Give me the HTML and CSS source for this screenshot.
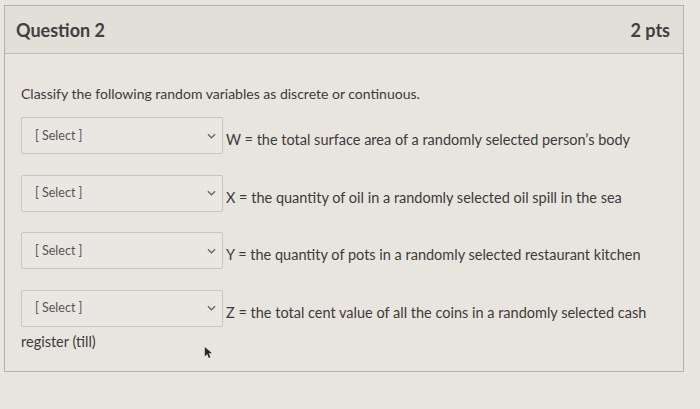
FILE: index.html
```html
<!DOCTYPE html>
<html lang="en">
<head>
    <meta charset="UTF-8">
    <meta name="viewport" content="width=device-width, initial-scale=1.0">
    <title>Question 2</title>
    <link rel="stylesheet" href="styles.css">
</head>
<body>
    <div class="quiz-card">
        <div class="quiz-header">
            <span class="quiz-title">Question 2</span>
            <span class="quiz-points">2 pts</span>
        </div>

        <div class="quiz-body">
            <p class="prompt">Classify the following random variables as discrete or continuous.</p>

            <p class="answer-row">
                <span class="select-box"><span class="select-label">[ Select ]</span>
                    <svg class="chevron" viewBox="0 0 10 6"><path d="M1 1l4 4 4-4"/></svg>
                </span><span>W = the total surface area of a randomly selected person’s body</span>
            </p>
            <p class="answer-row">
                <span class="select-box"><span class="select-label">[ Select ]</span>
                    <svg class="chevron" viewBox="0 0 10 6"><path d="M1 1l4 4 4-4"/></svg>
                </span><span>X = the quantity of oil in a randomly selected oil spill in the sea</span>
            </p>
            <p class="answer-row">
                <span class="select-box"><span class="select-label">[ Select ]</span>
                    <svg class="chevron" viewBox="0 0 10 6"><path d="M1 1l4 4 4-4"/></svg>
                </span><span>Y = the quantity of pots in a randomly selected restaurant kitchen</span>
            </p>
            <p class="answer-row">
                <span class="select-box"><span class="select-label">[ Select ]</span>
                    <svg class="chevron" viewBox="0 0 10 6"><path d="M1 1l4 4 4-4"/></svg>
                </span><span>Z = the total cent value of all the coins in a randomly selected cash</span> <span>register (till)</span>
            </p>
        </div>
    </div>

    <!-- mouse pointer left on screen -->
    <svg class="pointer" viewBox="0 0 10 16"><path d="M1 1v12l3-3 2 5 2-1-2-5h4z"/></svg>
</body>
</html>
```

FILE: styles.css
```css
body {
    font-family: Lato, "Open Sans", sans-serif;
    margin: 0;
    padding: 5px 0 0 4px;
    background-color: #e8e5df;
    color: #3b3b3b;
}
.quiz-card {
    width: 680px;
    height: 367px;
    border: 1px solid #b4b1ab;
    box-sizing: border-box;
}
.quiz-header {
    display: flex;
    justify-content: space-between;
    align-items: center;
    height: 47px;
    padding: 0 13px 0 11px;
    background-color: #e2dfd9;
    border-bottom: 1px solid #c0bdb7;
    font-size: 18px;
    font-weight: bold;
    color: #404040;
}
.quiz-body {
    padding: 31px 12px 0 16px;
    width: 652px;
}
.prompt {
    margin: 0 0 15px;
    font-size: 14px;
}
.answer-row {
    margin: 0 0 20px;
    font-size: 14.5px;
    line-height: 30px;
}
.select-box {
    display: inline-flex;
    align-items: center;
    justify-content: space-between;
    box-sizing: border-box;
    width: 202px;
    height: 37px;
    margin-right: 3px;
    padding: 0 6px 0 13px;
    vertical-align: 5px;
    border: 1px solid #c9c6c0;
    border-radius: 2px;
    background-color: #eae7e2;
    color: #555;
}
.select-label {
    font-size: 12.5px;
}
.chevron {
    width: 9px;
    height: 6px;
    fill: none;
    stroke: #666;
    stroke-width: 1.4;
}
.pointer {
    position: absolute;
    left: 204px;
    top: 346px;
    width: 8px;
    height: 13px;
    fill: #2a2a2a;
}
```
